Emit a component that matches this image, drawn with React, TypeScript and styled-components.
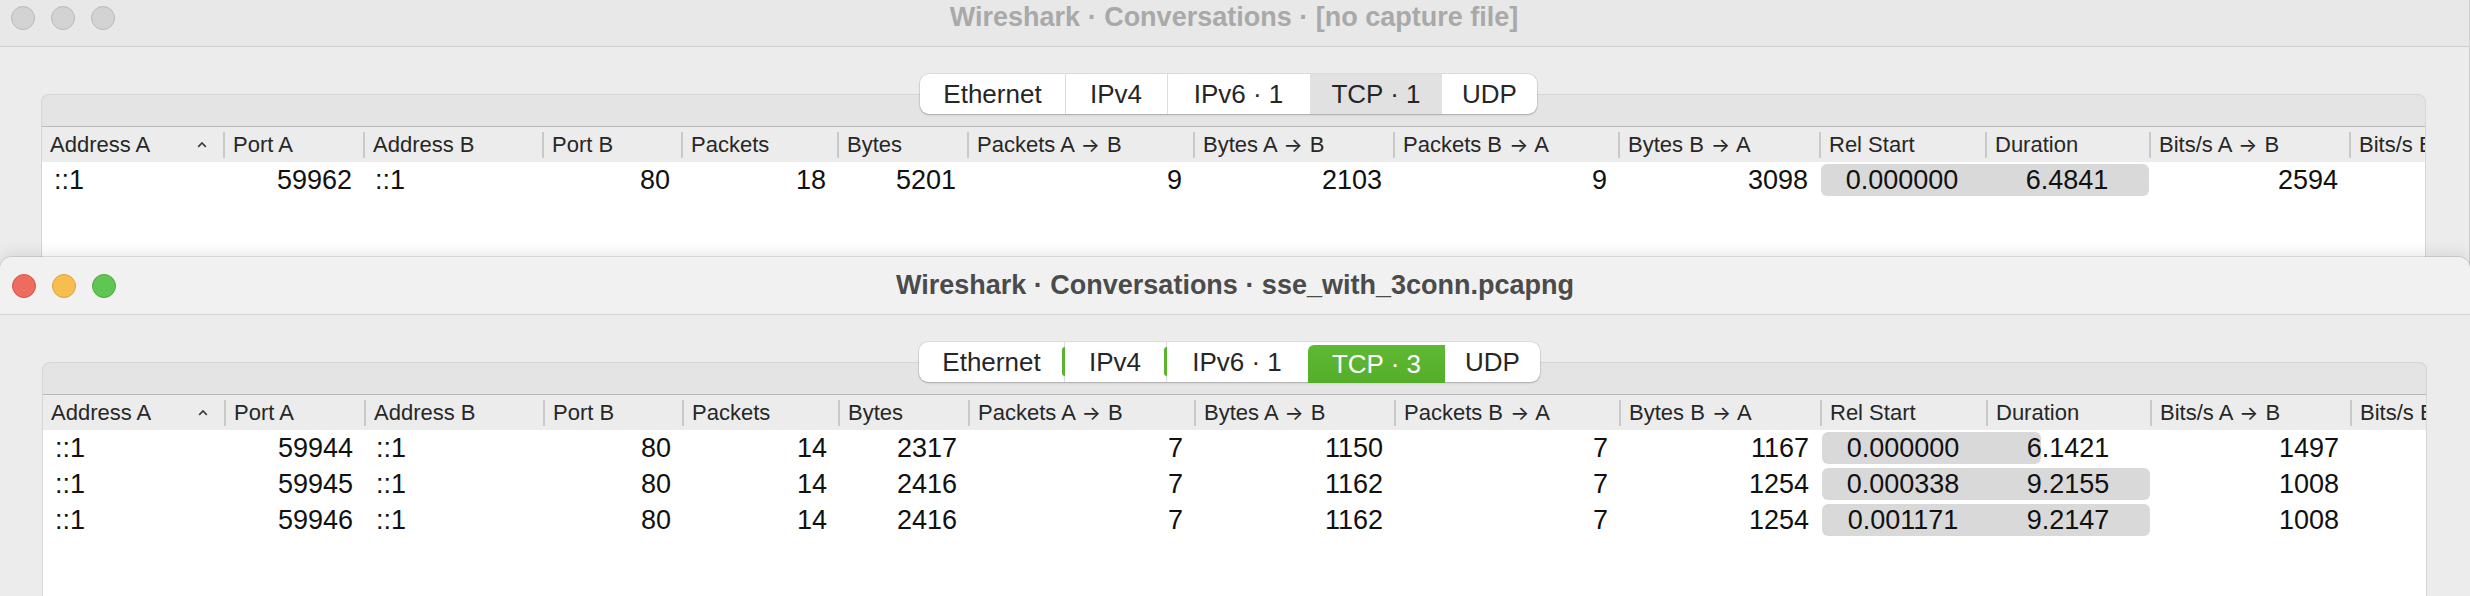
import React from "react";
import styled, { createGlobalStyle, css } from "styled-components";

const GlobalStyle = createGlobalStyle`
  html, body { margin: 0; padding: 0; background: #ececec; }
  body {
    font-family: "Liberation Sans", Arial, sans-serif;
    overflow: hidden;
  }
  * { box-sizing: border-box; }
`;

type Align = "left" | "right";
type Column = { label: string; width: number; align: Align };

const COLUMNS: Column[] = [
  { label: "Address A", width: 181, align: "left" },
  { label: "Port A", width: 140, align: "right" },
  { label: "Address B", width: 179, align: "left" },
  { label: "Port B", width: 139, align: "right" },
  { label: "Packets", width: 156, align: "right" },
  { label: "Bytes", width: 130, align: "right" },
  { label: "Packets A → B", width: 226, align: "right" },
  { label: "Bytes A → B", width: 200, align: "right" },
  { label: "Packets B → A", width: 225, align: "right" },
  { label: "Bytes B → A", width: 201, align: "right" },
  { label: "Rel Start", width: 166, align: "right" },
  { label: "Duration", width: 164, align: "right" },
  { label: "Bits/s A → B", width: 200, align: "right" },
  { label: "Bits/s B → A", width: 200, align: "right" },
];

const GRID = COLUMNS.map((c) => `${c.width}px`).join(" ");

type Conv = {
  addrA: string;
  portA: string;
  addrB: string;
  portB: string;
  packets: string;
  bytes: string;
  pktsAB: string;
  bytesAB: string;
  pktsBA: string;
  bytesBA: string;
  relStart: number;
  relStartText: string;
  duration: number;
  durationText: string;
  bpsAB: string;
  bpsBA: string;
};

type Tab = { label: string; width: number; selected?: boolean; ghost?: boolean };

const Desktop = styled.div`
  position: relative;
  width: 2470px;
  height: 596px;
  overflow: hidden;
  background: #dedede;
`;

const Window = styled.div<{ $top: number; $left: number; $height: number; $active: boolean }>`
  position: absolute;
  top: ${(p) => p.$top}px;
  left: ${(p) => p.$left}px;
  width: 2470px;
  height: ${(p) => p.$height}px;
  display: flex;
  flex-direction: column;
  background: #ececec;
  border-radius: 12px 12px 0 0;
  overflow: hidden;
  ${(p) =>
    p.$active
      ? css`
          box-shadow: 0 0 0 1px rgba(0, 0, 0, 0.1), 0 -3px 16px rgba(0, 0, 0, 0.1);
        `
      : css`
          box-shadow: 0 0 0 1px rgba(0, 0, 0, 0.06);
        `}
`;

const TitleBar = styled.div<{ $active: boolean }>`
  flex: none;
  height: 58px;
  display: grid;
  grid-template-columns: 1fr auto 1fr;
  align-items: center;
  padding: 0 12px;
  background: ${(p) => (p.$active ? "#f1f1f1" : "#e8e8e8")};
  border-bottom: 1px solid ${(p) => (p.$active ? "#d4d4d4" : "#cfcfcf")};
`;

const Lights = styled.div`
  display: flex;
  gap: 16px;
`;

const Light = styled.span<{ $fill: string; $stroke: string }>`
  width: 24px;
  height: 24px;
  border-radius: 50%;
  background: ${(p) => p.$fill};
  border: 1px solid ${(p) => p.$stroke};
`;

const Title = styled.div<{ $active: boolean }>`
  font-size: 27px;
  font-weight: 700;
  white-space: nowrap;
  color: ${(p) => (p.$active ? "#4b4b4b" : "#a9a9a9")};
`;

const Body = styled.div`
  flex: 1;
  display: flex;
  flex-direction: column;
  padding: 27px 43px 0 42px;
  min-height: 0;
`;

const TabBar = styled.div`
  align-self: center;
  position: relative;
  z-index: 2;
  display: flex;
  height: 40px;
  margin: 0 10px -20px 0;
  background: #ffffff;
  border-radius: 9px;
  box-shadow: 0 0 0 0.5px rgba(0, 0, 0, 0.12), 0 1px 2px rgba(0, 0, 0, 0.22);
`;

const Segment = styled.div<{
  $width: number;
  $selected: boolean;
  $active: boolean;
  $divider: boolean;
  $ghost: boolean;
}>`
  position: relative;
  width: ${(p) => p.$width}px;
  display: flex;
  align-items: center;
  justify-content: center;
  font-size: 26px;
  color: #262626;
  white-space: nowrap;
  ${(p) =>
    p.$divider &&
    css`
      box-shadow: inset 1px 0 #dcdcdc;
    `}
  ${(p) =>
    p.$selected &&
    !p.$active &&
    css`
      background: #e1e1e1;
    `}
  ${(p) =>
    p.$selected &&
    p.$active &&
    css`
      margin: 3px 0 -1px;
      background: linear-gradient(#5fb934, #55ae2a);
      color: #ffffff;
      border-radius: 6px 0 0 0;
    `}
  ${(p) =>
    p.$ghost &&
    css`
      &::before {
        content: "";
        position: absolute;
        left: -2px;
        top: 5px;
        bottom: 6px;
        width: 3px;
        border-radius: 3px 0 0 3px;
        background: #5ab42f;
      }
    `}
`;

const Pane = styled.div`
  flex: 1;
  min-height: 0;
  display: flex;
  flex-direction: column;
  padding-top: 31px;
  background: #e4e4e4;
  border: 1px solid #d6d6d6;
  border-bottom: none;
  border-radius: 8px 8px 0 0;
  overflow: hidden;
`;

const Tree = styled.div`
  flex: 1;
  display: flex;
  flex-direction: column;
  background: #ffffff;
  overflow: hidden;
`;

const HeaderRow = styled.div`
  flex: none;
  display: grid;
  grid-template-columns: ${GRID};
  height: 36px;
  background: #ececec;
  border-top: 1px solid #b9b9b9;
`;

const HeaderCell = styled.div<{ $first: boolean }>`
  display: flex;
  align-items: center;
  justify-content: space-between;
  padding: 0 16px 0 ${(p) => (p.$first ? 8 : 10)}px;
  font-size: 22px;
  color: #272727;
  white-space: nowrap;
  overflow: hidden;
  ${(p) =>
    !p.$first &&
    css`
      background: linear-gradient(#c9c9c9, #c9c9c9) left center / 2px 26px no-repeat;
    `}
`;

const Arrow = styled.span`
  font-family: Inter, "DejaVu Sans", sans-serif;
  font-size: 20px;
  margin: 0 1px;
`;

const SortIcon = styled.svg`
  flex: none;
  width: 10px;
  height: 7px;
`;

const Row = styled.div`
  flex: none;
  display: grid;
  grid-template-columns: ${GRID};
  height: 36px;
  align-items: center;
  font-size: 27px;
  color: #111111;
`;

const Cell = styled.div<{ $align: Align }>`
  padding: ${(p) => (p.$align === "right" ? "0 11px 0 0" : "0 0 0 12px")};
  text-align: ${(p) => p.$align};
  white-space: nowrap;
  overflow: hidden;
`;

const TimelineCell = styled.div`
  grid-column: span 2;
  position: relative;
  height: 100%;
`;

const BarTrack = styled.div`
  position: absolute;
  top: 2px;
  bottom: 2px;
  left: 2px;
  right: 0;
`;

const Bar = styled.div`
  position: absolute;
  top: 0;
  bottom: 0;
  background: #d9d9d9;
  border-radius: 6px;
`;

const TimeValues = styled.div`
  position: relative;
  height: 100%;
  display: grid;
  grid-template-columns: 166px 164px;
  align-items: center;
  text-align: center;
`;

function Label({ text }: { text: string }) {
  const parts = text.split("→");
  if (parts.length === 1) return <span>{text}</span>;
  return (
    <span>
      {parts[0]}
      <Arrow>→</Arrow>
      {parts[1]}
    </span>
  );
}

function TrafficLights({ active }: { active: boolean }) {
  const colors = active
    ? [
        ["#ee6b5f", "#d4574a"],
        ["#f6be4f", "#dba340"],
        ["#61c554", "#4fa944"],
      ]
    : [
        ["#d3d3d3", "#b9b9b9"],
        ["#d3d3d3", "#b9b9b9"],
        ["#d3d3d3", "#b9b9b9"],
      ];
  return (
    <Lights>
      {colors.map(([f, s], i) => (
        <Light key={i} $fill={f} $stroke={s} />
      ))}
    </Lights>
  );
}

function ConversationTable({ rows }: { rows: Conv[] }) {
  const total = Math.max(...rows.map((r) => r.relStart + r.duration));
  return (
    <Tree>
      <HeaderRow>
        {COLUMNS.map((c, i) => (
          <HeaderCell key={c.label} $first={i === 0}>
            <Label text={c.label} />
            {i === 0 && (
              <SortIcon viewBox="0 0 10 7">
                <path d="M1.2 5.8 L5 2 L8.8 5.8" fill="none" stroke="#3c3c3c" strokeWidth="1.7" />
              </SortIcon>
            )}
          </HeaderCell>
        ))}
      </HeaderRow>
      {rows.map((r, idx) => {
        const plain = [
          r.addrA,
          r.portA,
          r.addrB,
          r.portB,
          r.packets,
          r.bytes,
          r.pktsAB,
          r.bytesAB,
          r.pktsBA,
          r.bytesBA,
        ];
        return (
          <Row key={idx}>
            {plain.map((v, i) => (
              <Cell key={i} $align={COLUMNS[i].align}>
                {v}
              </Cell>
            ))}
            <TimelineCell>
              <BarTrack>
                <Bar
                  style={{
                    left: `${(r.relStart / total) * 100}%`,
                    width: `${(r.duration / total) * 100}%`,
                  }}
                />
              </BarTrack>
              <TimeValues>
                <span>{r.relStartText}</span>
                <span>{r.durationText}</span>
              </TimeValues>
            </TimelineCell>
            <Cell $align="right">{r.bpsAB}</Cell>
            <Cell $align="right">{r.bpsBA}</Cell>
          </Row>
        );
      })}
    </Tree>
  );
}

function ConversationsWindow({
  title,
  active,
  top,
  left,
  height,
  tabs,
  rows,
}: {
  title: string;
  active: boolean;
  top: number;
  left: number;
  height: number;
  tabs: Tab[];
  rows: Conv[];
}) {
  return (
    <Window $top={top} $left={left} $height={height} $active={active}>
      <TitleBar $active={active}>
        <TrafficLights active={active} />
        <Title $active={active}>{title}</Title>
        <span />
      </TitleBar>
      <Body>
        <TabBar>
          {tabs.map((t, i) => {
            const prev = tabs[i - 1];
            const divider = i > 0 && !t.selected && !!prev && !prev.selected && !(active && t.ghost);
            return (
              <Segment
                key={t.label}
                $width={t.width}
                $selected={!!t.selected}
                $active={active}
                $divider={divider || (active && !!t.ghost)}
                $ghost={active && !!t.ghost}
              >
                {t.label}
              </Segment>
            );
          })}
        </TabBar>
        <Pane>
          <ConversationTable rows={rows} />
        </Pane>
      </Body>
    </Window>
  );
}

const conv = (
  portA: string,
  packets: string,
  bytes: string,
  pktsAB: string,
  bytesAB: string,
  pktsBA: string,
  bytesBA: string,
  relStartText: string,
  durationText: string,
  bpsAB: string,
  bpsBA: string
): Conv => ({
  addrA: "::1",
  portA,
  addrB: "::1",
  portB: "80",
  packets,
  bytes,
  pktsAB,
  bytesAB,
  pktsBA,
  bytesBA,
  relStart: parseFloat(relStartText),
  relStartText,
  duration: parseFloat(durationText),
  durationText,
  bpsAB,
  bpsBA,
});

const ROWS_1: Conv[] = [
  conv("59962", "18", "5201", "9", "2103", "9", "3098", "0.000000", "6.4841", "2594", "3822"),
];

const ROWS_2: Conv[] = [
  conv("59944", "14", "2317", "7", "1150", "7", "1167", "0.000000", "6.1421", "1497", "1520"),
  conv("59945", "14", "2416", "7", "1162", "7", "1254", "0.000338", "9.2155", "1008", "1088"),
  conv("59946", "14", "2416", "7", "1162", "7", "1254", "0.001171", "9.2147", "1008", "1088"),
];

const TABS_1: Tab[] = [
  { label: "Ethernet", width: 145 },
  { label: "IPv4", width: 102 },
  { label: "IPv6 · 1", width: 143 },
  { label: "TCP · 1", width: 132, selected: true },
  { label: "UDP", width: 95 },
];

const TABS_2: Tab[] = [
  { label: "Ethernet", width: 145 },
  { label: "IPv4", width: 102, ghost: true },
  { label: "IPv6 · 1", width: 142, ghost: true },
  { label: "TCP · 3", width: 137, selected: true },
  { label: "UDP", width: 95 },
];

export default function App() {
  return (
    <>
      <GlobalStyle />
      <Desktop>
        <ConversationsWindow
          title="Wireshark · Conversations · [no capture file]"
          active={false}
          top={-11}
          left={-1}
          height={330}
          tabs={TABS_1}
          rows={ROWS_1}
        />
        <ConversationsWindow
          title="Wireshark · Conversations · sse_with_3conn.pcapng"
          active={true}
          top={257}
          left={0}
          height={420}
          tabs={TABS_2}
          rows={ROWS_2}
        />
      </Desktop>
    </>
  );
}
